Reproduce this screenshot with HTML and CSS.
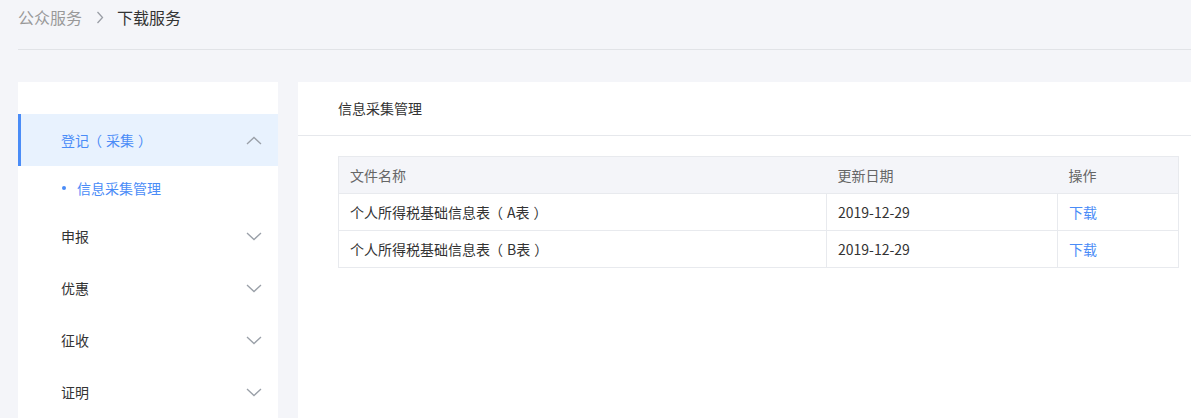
FILE: index.html
```html
<!DOCTYPE html>
<html lang="zh-CN">
<head>
<meta charset="utf-8">
<title>下载服务</title>
<link rel="stylesheet" href="styles.css">
</head>
<body>
<div class="page">
  <div class="breadcrumb">
    <span class="crumb-parent">公众服务</span>
    <svg class="crumb-sep" width="8" height="13" viewBox="0 0 8 13"><polyline points="1.5,1 6.5,6.5 1.5,12" fill="none" stroke="#9a9ea6" stroke-width="1.3"/></svg>
    <span class="crumb-current">下载服务</span>
  </div>
  <div class="content">
    <aside class="sidebar">
      <div class="menu-item active">
        <span class="label">登记<span class="lp">（</span>采集<span class="rp">）</span></span>
        <svg class="chev" width="16" height="9" viewBox="0 0 16 9"><polyline points="1,8 8,1.5 15,8" fill="none" stroke="#9aa0a8" stroke-width="1.3"/></svg>
      </div>
      <div class="sub-item"><span class="dot"></span><span class="label">信息采集管理</span></div>
      <div class="menu-item">
        <span class="label">申报</span>
        <svg class="chev" width="16" height="9" viewBox="0 0 16 9"><polyline points="1,1 8,7.5 15,1" fill="none" stroke="#9aa0a8" stroke-width="1.3"/></svg>
      </div>
      <div class="menu-item">
        <span class="label">优惠</span>
        <svg class="chev" width="16" height="9" viewBox="0 0 16 9"><polyline points="1,1 8,7.5 15,1" fill="none" stroke="#9aa0a8" stroke-width="1.3"/></svg>
      </div>
      <div class="menu-item">
        <span class="label">征收</span>
        <svg class="chev" width="16" height="9" viewBox="0 0 16 9"><polyline points="1,1 8,7.5 15,1" fill="none" stroke="#9aa0a8" stroke-width="1.3"/></svg>
      </div>
      <div class="menu-item">
        <span class="label">证明</span>
        <svg class="chev" width="16" height="9" viewBox="0 0 16 9"><polyline points="1,1 8,7.5 15,1" fill="none" stroke="#9aa0a8" stroke-width="1.3"/></svg>
      </div>
    </aside>
    <main class="main">
      <div class="main-title">信息采集管理</div>
      <table class="files">
        <colgroup><col class="c1"><col class="c2"><col class="c3"></colgroup>
        <thead>
          <tr><th>文件名称</th><th>更新日期</th><th>操作</th></tr>
        </thead>
        <tbody>
          <tr><td>个人所得税基础信息表<span class="lp">（</span>A表<span class="rp">）</span></td><td>2019-12-29</td><td><a class="dl" href="#">下载</a></td></tr>
          <tr><td>个人所得税基础信息表<span class="lp">（</span>B表<span class="rp">）</span></td><td>2019-12-29</td><td><a class="dl" href="#">下载</a></td></tr>
        </tbody>
      </table>
    </main>
  </div>
</div>
</body>
</html>
```
FILE: styles.css
```css
html, body {
  margin: 0;
  padding: 0;
  background: #f4f5f9;
  font-family: "Noto Sans CJK SC", "Noto Sans", "Liberation Sans", sans-serif;
  color: #333;
  font-size: 14px;
}
.page {
  padding-left: 18px;
  height: 418px;
  overflow: hidden;
}
.breadcrumb {
  height: 49px;
  border-bottom: 1px solid #e1e3e7;
  display: flex;
  align-items: flex-start;
  font-size: 16px;
  line-height: 35px;
  white-space: nowrap;
}
.crumb-parent { color: #999; }
.crumb-sep { margin: 11px 13px 0 14px; }
.crumb-current { color: #333; }
.content {
  margin-top: 32px;
  display: flex;
  gap: 20px;
}
.sidebar {
  width: 260px;
  flex: none;
  background: #fff;
  padding-top: 32px;
  min-height: 400px;
}
.label { white-space: nowrap; flex: none; }
.menu-item {
  height: 52px;
  display: flex;
  align-items: center;
  justify-content: space-between;
  padding: 0 16px 0 40px;
  color: #333;
  border-left: 3px solid transparent;
}
.menu-item.active {
  background: #e8f2fe;
  border-left-color: #4a8cf7;
  color: #4a8cf7;
}
.lp { margin-left: -1px; margin-right: 4px; }
.rp { margin-left: 4px; margin-right: -1px; }
.chev { display: block; flex: none; }
.sub-item {
  height: 44px;
  display: flex;
  align-items: center;
  padding-left: 44px;
  color: #4a8cf7;
}
.dot {
  width: 4px;
  height: 4px;
  border-radius: 50%;
  background: #4a8cf7;
  margin-right: 11px;
  flex: none;
}
.main {
  flex: 1;
  background: #fff;
  min-height: 400px;
}
.main-title {
  height: 53px;
  line-height: 52px;
  padding-left: 40px;
  border-bottom: 1px solid #e6e8ec;
  color: #333;
}
.files {
  margin: 20px 13px 0 40px;
  width: 840px;
  border-collapse: collapse;
  table-layout: fixed;
  border: 1px solid #e8eaee;
}
.c1 { width: 488px; }
.c2 { width: 231px; }
.c3 { width: 121px; }
.files th {
  background: #f4f5f9;
  color: #666;
  font-weight: normal;
  text-align: left;
  height: 36px;
  padding: 0 11px;
  border-bottom: 1px solid #e8eaee;
  white-space: nowrap;
}
.files td {
  height: 36px;
  padding: 0 11px;
  border: 1px solid #e8eaee;
  color: #333;
  white-space: nowrap;
}
.dl {
  color: #4a8cf7;
  text-decoration: none;
}
```
